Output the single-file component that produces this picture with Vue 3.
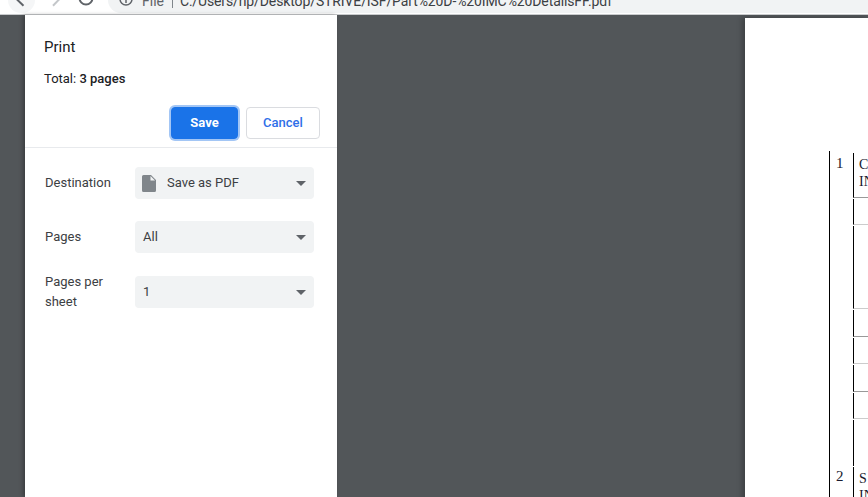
<script setup>
const rows = [
  { label: 'Destination', value: 'Save as PDF', icon: true },
  { label: 'Pages', value: 'All' },
  { label: 'Pages per sheet', value: '1' },
]
const tableCells = [
  { h: 45, tone: 'dark', text: ['C', 'IN'] },
  { h: 26, tone: 'light' },
  { h: 83, tone: 'light' },
  { h: 27, tone: 'dark' },
  { h: 26, tone: 'light' },
  { h: 27, tone: 'dark' },
  { h: 26, tone: 'light' },
  { h: 46, tone: 'none' },
  { h: 40, tone: 'none', text: ['S', 'IN'] },
]
</script>

<template>
  <div class="screen">
    <header class="toolbar">
      <div class="nav-btn">
        <svg width="16" height="14" viewBox="0 0 16 14"><path d="M2.500 -1 L9.500 5.700" fill="none" stroke="#5f6368" stroke-width="2" /></svg>
      </div>
      <svg class="nav-icon" width="16" height="14" viewBox="0 0 16 14"><path d="M4 5.700 L10.500 -1" fill="none" stroke="#c4c7ca" stroke-width="2" /></svg>
      <svg class="nav-icon reload" width="16" height="14" viewBox="0 0 16 14"><path d="M1.500 -2 A6.500 6.500 0 0 0 14.500 -2" fill="none" stroke="#5f6368" stroke-width="2" /></svg>
      <div class="omnibox">
        <svg width="16" height="14" viewBox="0 0 16 14"><circle cx="8" cy="-1" r="6" fill="none" stroke="#5f6368" stroke-width="1.500" /><path d="M8 -1v4" stroke="#5f6368" stroke-width="1.500" /></svg>
        <span class="scheme">File</span>
        <span class="sep"></span>
        <span class="url">C:/Users/hp/Desktop/STRIVE/ISF/Part%20D-%20IMC%20DetailsFF.pdf</span>
      </div>
    </header>

    <main class="body">
      <div class="gutter"></div>
      <aside class="sidebar">
        <section class="head">
          <h1>Print</h1>
          <p class="total">Total: <b>3 pages</b></p>
          <div class="actions">
            <button class="btn save">Save</button>
            <button class="btn cancel">Cancel</button>
          </div>
        </section>
        <section class="settings">
          <div v-for="r in rows" :key="r.label" class="row">
            <label>{{ r.label }}</label>
            <div class="select">
              <svg v-if="r.icon" class="file" width="14" height="17" viewBox="0 0 14 17"><path d="M1.500 0h7.500l5 5v10.500a1.500 1.500 0 0 1-1.500 1.500h-11A1.500 1.500 0 0 1 0 15.500V1.500A1.500 1.500 0 0 1 1.500 0z" fill="#80868b" /><path d="M8.500 1v4.500H13z" fill="#f1f3f4" /></svg>
              <span class="value">{{ r.value }}</span>
              <i class="caret"></i>
            </div>
          </div>
        </section>
      </aside>
      <section class="viewer">
        <article class="page">
          <div class="table">
            <div class="num-col">
              <span class="n one">1</span>
              <span class="n two">2</span>
            </div>
            <div class="cells">
              <div
                v-for="(c, i) in tableCells"
                :key="i"
                class="cell"
                :class="c.tone"
                :style="{ height: c.h + 'px' }"
              >
                <template v-if="c.text">{{ c.text[0] }}<br />{{ c.text[1] }}</template>
              </div>
            </div>
          </div>
        </article>
      </section>
    </main>
  </div>
</template>

<style>
html, body { margin: 0; background: #525659; }
</style>

<style scoped>
.screen {
  width: 868px;
  height: 497px;
  overflow: hidden;
  display: flex;
  flex-direction: column;
  font-family: Roboto, "Liberation Sans", sans-serif;
}
.toolbar {
  height: 15px;
  flex: none;
  background: #fff;
  border-bottom: 1px solid #c9cbcd;
  box-sizing: border-box;
  display: flex;
  align-items: flex-start;
  overflow: hidden;
  padding-left: 8px;
}
.nav-btn {
  width: 27px;
  height: 13px;
  flex: none;
  background: #f5f6f7;
  border-radius: 0 0 14px 14px;
  display: flex;
  justify-content: center;
  margin-right: 14px;
}
.nav-icon { flex: none; margin-right: 13px; }
.reload { margin-right: 14px; }
.omnibox {
  flex: 1;
  height: 13px;
  background: #f1f3f4;
  border-radius: 0 0 0 14px;
  display: flex;
  align-items: flex-start;
  padding-left: 10px;
  font-size: 14px;
  line-height: 14px;
  white-space: nowrap;
  overflow: hidden;
}
.omnibox svg { flex: none; }
.omnibox span { margin-top: -6px; }
.scheme { color: #5f6368; margin-left: 8px; }
.sep { width: 1px; height: 14px; background: #80868b; margin: 0 7px 0 8px; }
.url { color: #3c4043; letter-spacing: -0.11px; }
.body { flex: 1; display: flex; min-height: 0; background: #525659; }
.gutter { width: 25px; flex: none; }
.sidebar {
  width: 312px;
  flex: none;
  background: #fff;
  box-shadow: -2px 0 4px rgba(0, 0, 0, 0.3);
  display: flex;
  flex-direction: column;
}
.head {
  height: 133px;
  box-sizing: border-box;
  border-bottom: 1px solid #e8eaed;
  padding: 0 17px 8px 19px;
  display: flex;
  flex-direction: column;
}
h1 {
  margin: 22px 0 0;
  font-size: 15px;
  line-height: 20px;
  font-weight: 400;
  color: #202124;
}
.total {
  margin: 13px 0 0;
  font-size: 13px;
  line-height: 17px;
  color: #202124;
}
.total b { font-weight: 500; }
.actions {
  margin-top: auto;
  display: flex;
  justify-content: flex-end;
  gap: 8px;
}
.btn {
  height: 32px;
  box-sizing: border-box;
  border-radius: 4px;
  font: 500 13px Roboto, "Liberation Sans", sans-serif;
  padding: 0 0 2px;
}
.save {
  width: 67px;
  font-weight: 700;
  background: #1a73e8;
  color: #fff;
  border: 1px solid #1a73e8;
  box-shadow: 0 0 0 2px #a3c6f5;
}
.cancel {
  width: 74px;
  background: #fff;
  color: #2f6fe8;
  border: 1px solid #dadce0;
}
.settings { padding-top: 19px; display: flex; flex-direction: column; gap: 22px; }
.row { display: flex; align-items: center; padding-left: 20px; height: 32px; }
.row:last-child { margin-top: 1px; }
.row label {
  width: 90px;
  flex: none;
  font-size: 13px;
  line-height: 20px;
  color: #3c4043;
  padding-right: 20px;
  box-sizing: border-box;
}
.select {
  width: 179px;
  height: 32px;
  border-radius: 4px;
  background: #f1f3f4;
  display: flex;
  align-items: center;
  padding: 0 8px;
  box-sizing: border-box;
  font-size: 13px;
  color: #3c4043;
}
.value { margin-top: -2px; }
.file { margin: 0 11px 0 -1px; }
.caret {
  margin-left: auto;
  width: 0;
  height: 0;
  border-left: 5px solid transparent;
  border-right: 5px solid transparent;
  border-top: 5px solid #5f6368;
}
.viewer { flex: 1; min-width: 0; padding: 3px 0 0 408px; overflow: hidden; }
.page {
  background: #fff;
  height: 600px;
  box-shadow: -3px 0 5px rgba(0, 0, 0, 0.25);
  padding: 133px 0 0 84px;
  box-sizing: border-box;
  font-family: "Liberation Serif", serif;
  font-size: 14px;
  line-height: 17px;
  color: #1a1a2e;
  overflow: hidden;
}
.table { display: flex; }
.num-col {
  width: 24px;
  flex: none;
  border-left: 1px solid #000;
  height: 400px;
  position: relative;
  box-sizing: border-box;
}
.n { position: absolute; left: 6px; font-size: 15px; }
.one { top: 4px; }
.two { top: 317px; }
.cells { flex: 1; min-width: 0; margin-top: 2px; }
.cell {
  border-left: 1px solid #000;
  box-sizing: border-box;
  margin-bottom: 1px;
  padding: 3px 0 0 5px;
  white-space: nowrap;
  overflow: hidden;
}
.cell.dark { border-bottom: 1px solid #999; }
.cell.light { border-bottom: 1px solid #ccc; }
</style>
